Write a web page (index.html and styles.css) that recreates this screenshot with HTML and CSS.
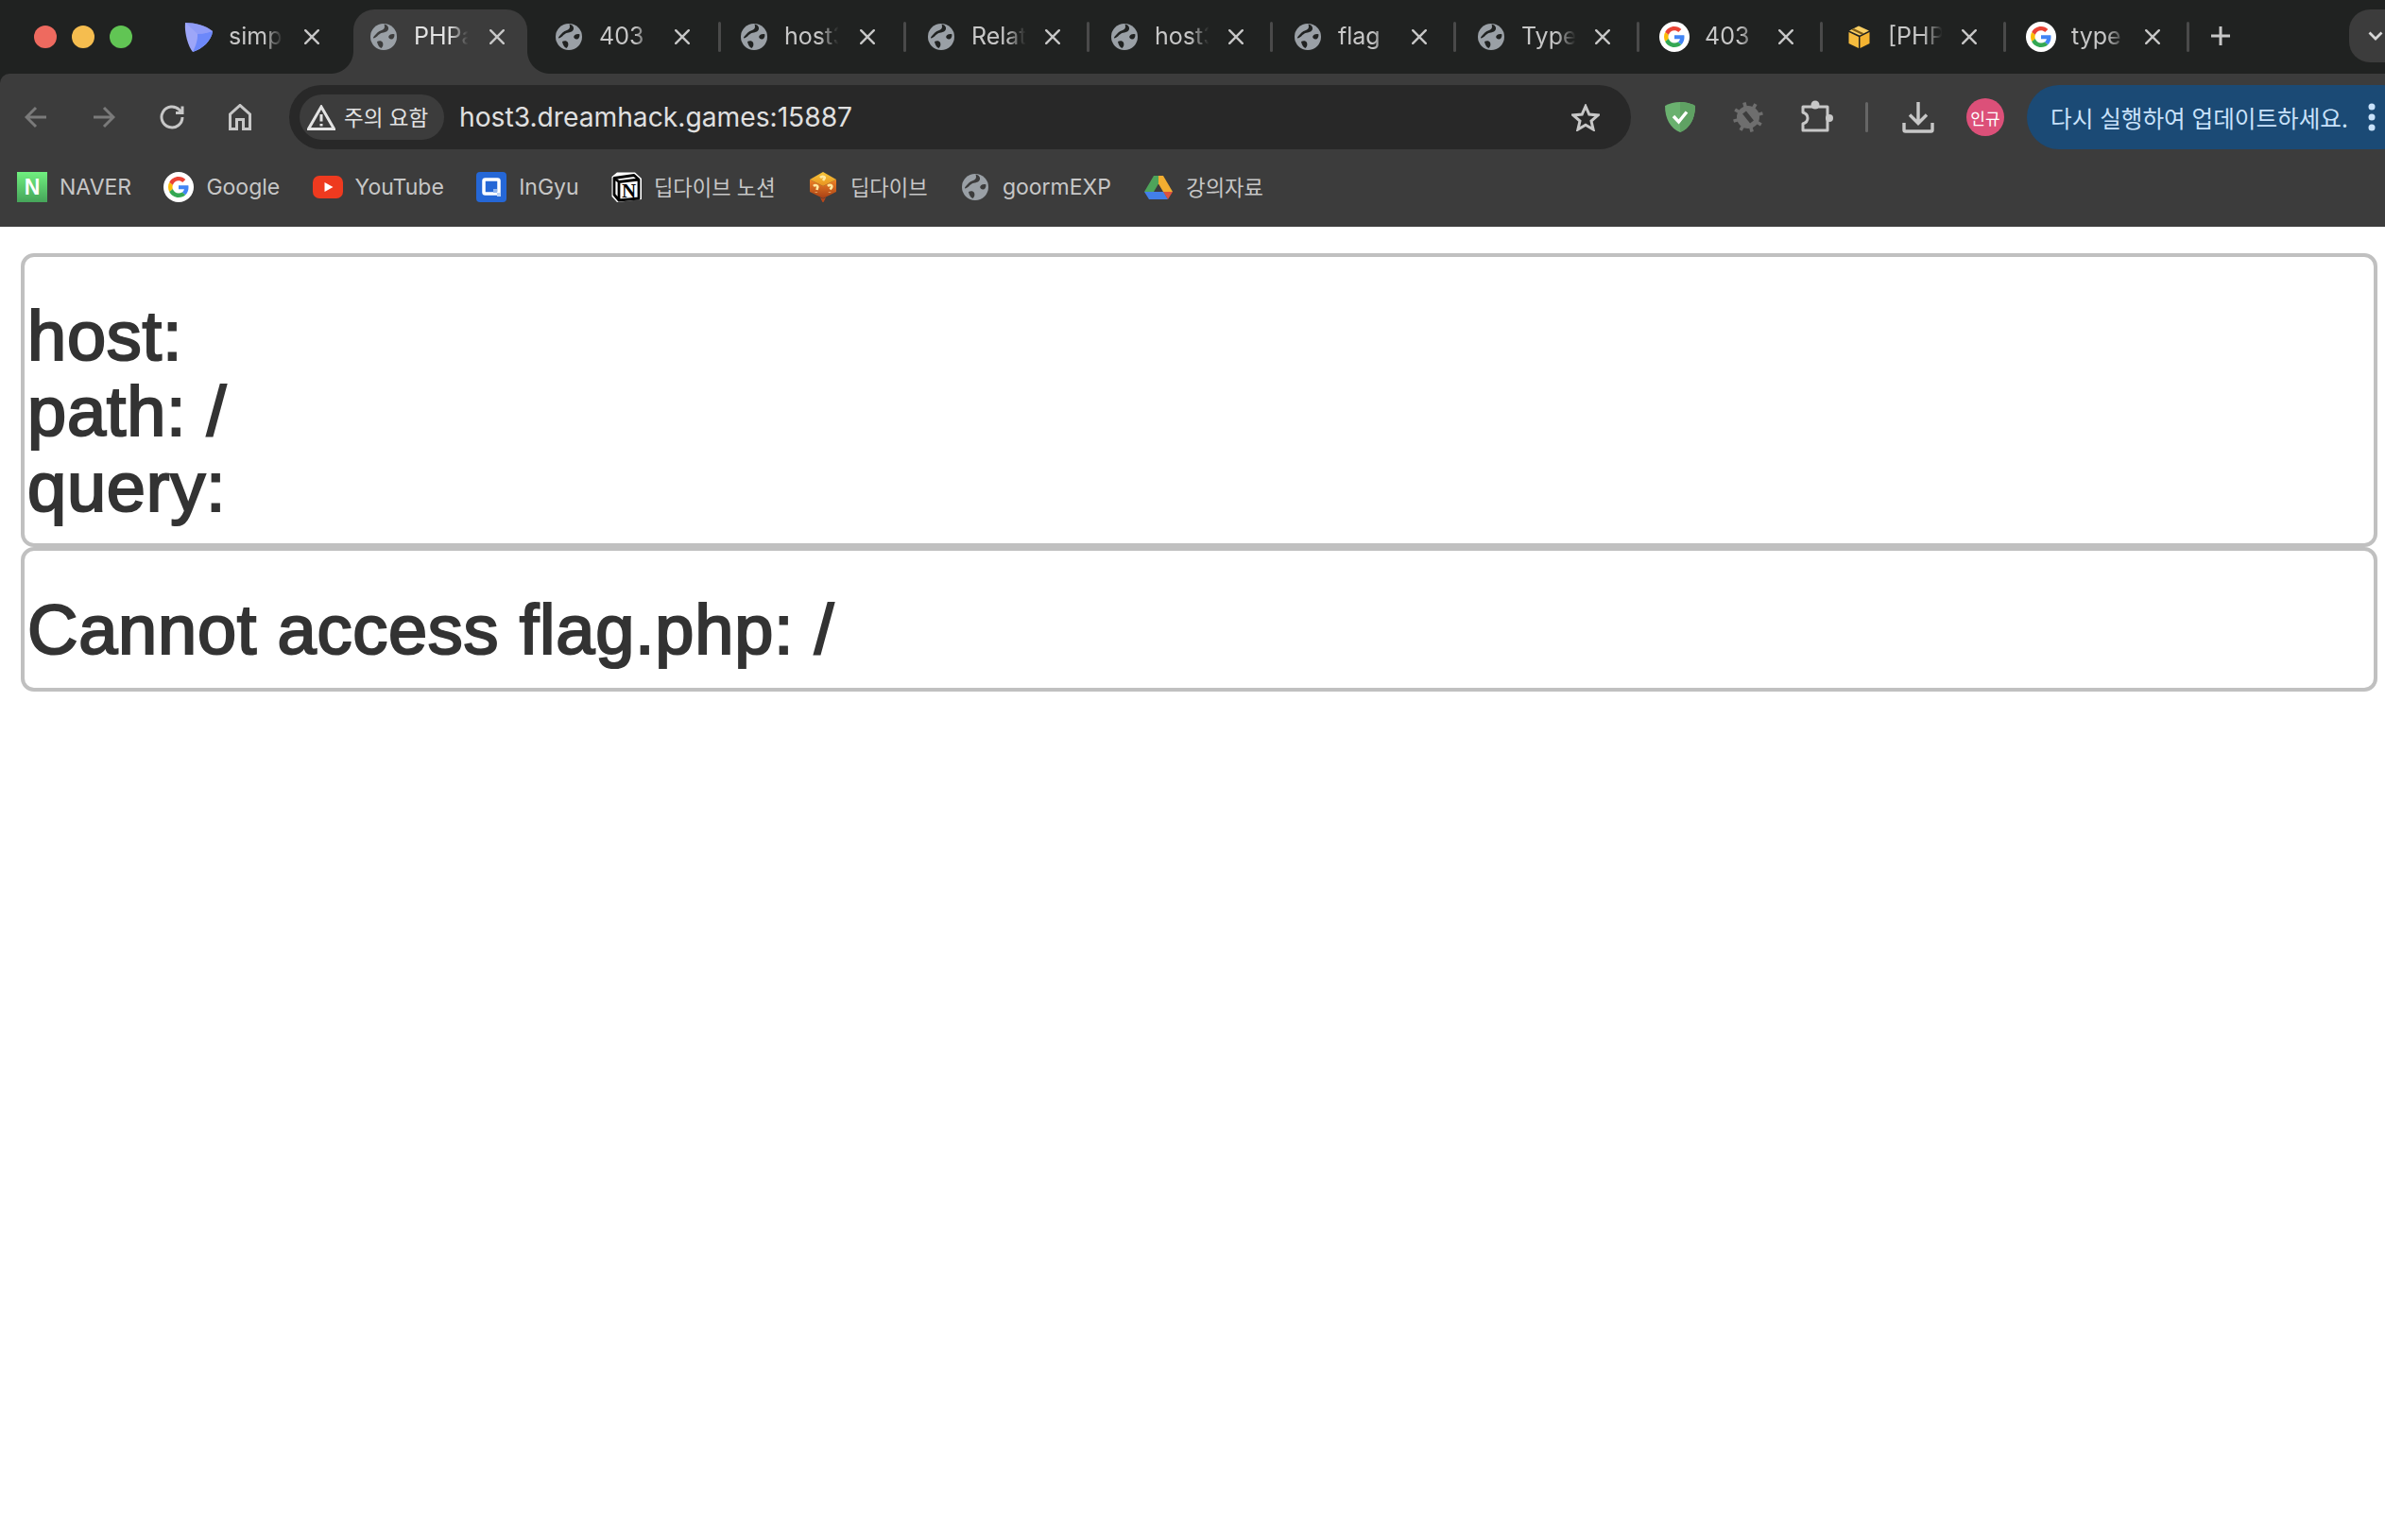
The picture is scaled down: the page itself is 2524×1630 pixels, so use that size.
FILE: index.html
```html
<!DOCTYPE html>
<html lang="ko">
<head>
<meta charset="utf-8">
<title>host3.dreamhack.games:15887</title>
<link rel="stylesheet" href="styles.css">
</head>
<body>
<svg class="defs" width="0" height="0" aria-hidden="true">
  <defs>
    <symbol id="globe" viewBox="0 0 32 32">
      <circle cx="16" cy="16" r="14" class="globe-base"/>
      <path class="globe-cut" d="M16.5 2.5C20.5 3.5 22 6.5 20.5 9C19 11.5 15 11 12.5 12.5C10 14 8.5 17 5 17.5C4.5 16 6.5 15 8 13C10 10 13 9.5 15 8.5C17 7.5 17.5 5.5 16.5 2.5Z"/>
      <path class="globe-cut" d="M9 21C11.5 19.5 14 20 15 22C16 24.5 15 26.5 13.5 28C11 27 9.5 24 9 21Z"/>
      <path class="globe-cut" d="M27.5 13.5C25 12.5 22.5 13.5 21.5 15C20.5 17 22.5 18.5 24.5 18.5C26 18.5 27.5 17 27.5 13.5Z"/>
    </symbol>
    <symbol id="gicon" viewBox="-11 -11 70 70">
      <circle cx="24" cy="24" r="35" fill="#fff"/>
      <path fill="#ea4335" d="M24 9.5c3.54 0 6.71 1.22 9.21 3.6l6.85-6.85C35.9 2.38 30.47 0 24 0 14.62 0 6.51 5.38 2.56 13.22l7.98 6.19C12.43 13.72 17.74 9.5 24 9.5z"/>
      <path fill="#4285f4" d="M46.98 24.55c0-1.57-.15-3.09-.38-4.55H24v9.02h12.94c-.58 2.96-2.26 5.48-4.78 7.18l7.73 6c4.51-4.18 7.09-10.36 7.09-17.65z"/>
      <path fill="#fbbc05" d="M10.53 28.59c-.48-1.45-.76-2.99-.76-4.59s.27-3.14.76-4.59l-7.98-6.19C.92 16.46 0 20.12 0 24c0 3.88.92 7.54 2.56 10.78l7.97-6.19z"/>
      <path fill="#34a853" d="M24 48c6.48 0 11.93-2.13 15.89-5.81l-7.73-6c-2.15 1.45-4.92 2.3-8.16 2.3-6.26 0-11.57-4.22-13.47-9.91l-7.98 6.19C6.51 42.62 14.62 48 24 48z"/>
    </symbol>
    <symbol id="close" viewBox="0 0 16 16">
      <path d="M1.2 1.2L14.8 14.8M14.8 1.2L1.2 14.8" class="stroke-close"/>
    </symbol>
    <linearGradient id="naver-grad" x1="0" y1="0" x2="0" y2="1">
      <stop offset="0" stop-color="#70f07f"/>
      <stop offset="1" stop-color="#46a45a"/>
    </linearGradient>
    <linearGradient id="cube-top" x1="0" y1="0" x2="0" y2="1">
      <stop offset="0" stop-color="#f7c83a"/>
      <stop offset="1" stop-color="#e8901f"/>
    </linearGradient>
    <linearGradient id="cube-side" x1="0" y1="0" x2="0" y2="1">
      <stop offset="0" stop-color="#ef8426"/>
      <stop offset="1" stop-color="#a83f15"/>
    </linearGradient>
  </defs>
</svg>

<header class="chrome">
  <div class="strip">
    <div class="lights">
      <span class="light red"></span>
      <span class="light yellow"></span>
      <span class="light green"></span>
    </div>
    <div class="tabs">
      <div class="tab wide">
        <svg class="favicon" viewBox="0 0 32 32">
          <path fill="#9da6f8" d="M2 1C12 1 24 4 31 10C30 20 20 29 10 32C5 26 1 12 2 1Z"/>
          <path fill="#6c88fa" d="M15 13C21 13 27 11 31 10C30 20 20 29 10 32C13 26 15.5 19 15 13Z"/>
          <path fill="#8494f8" d="M2 1C12 1 24 4 31 10C27 11 21 13 15 13C11 9 6 4 2 1Z" opacity=".55"/>
        </svg>
        <span class="title">simp</span>
        <svg class="x"><use href="#close"/></svg>
      </div>
      <div class="tab wide active">
        <svg class="favicon"><use href="#globe"/></svg>
        <span class="title">PHPa</span>
        <svg class="x"><use href="#close"/></svg>
      </div>
      <div class="tab wide sep">
        <svg class="favicon"><use href="#globe"/></svg>
        <span class="title">403</span>
        <svg class="x"><use href="#close"/></svg>
      </div>
      <div class="tab wide sep">
        <svg class="favicon"><use href="#globe"/></svg>
        <span class="title">host3</span>
        <svg class="x"><use href="#close"/></svg>
      </div>
      <div class="tab sep">
        <svg class="favicon"><use href="#globe"/></svg>
        <span class="title">Relat</span>
        <svg class="x"><use href="#close"/></svg>
      </div>
      <div class="tab sep">
        <svg class="favicon"><use href="#globe"/></svg>
        <span class="title">host3</span>
        <svg class="x"><use href="#close"/></svg>
      </div>
      <div class="tab sep">
        <svg class="favicon"><use href="#globe"/></svg>
        <span class="title">flag</span>
        <svg class="x"><use href="#close"/></svg>
      </div>
      <div class="tab sep">
        <svg class="favicon"><use href="#globe"/></svg>
        <span class="title">Type</span>
        <svg class="x"><use href="#close"/></svg>
      </div>
      <div class="tab sep">
        <svg class="favicon"><use href="#gicon"/></svg>
        <span class="title">403</span>
        <svg class="x"><use href="#close"/></svg>
      </div>
      <div class="tab sep">
        <svg class="favicon" viewBox="0 0 32 32">
          <path fill="#f8ce62" d="M17 4.5L28 9.5L18 14.5L7 9.5Z"/>
          <path fill="#f5bc3e" d="M6.5 11L17 16V28L6.5 23Z"/>
          <path fill="#f3b331" d="M18.5 16L28.5 11V23L18.5 28Z"/>
          <path fill="#7c5a14" d="M12 7.2L22.5 12.3L20 13.5L9.5 8.4Z"/>
        </svg>
        <span class="title">[PHP</span>
        <svg class="x"><use href="#close"/></svg>
      </div>
      <div class="tab sep">
        <svg class="favicon"><use href="#gicon"/></svg>
        <span class="title">type</span>
        <svg class="x"><use href="#close"/></svg>
      </div>
    </div>
    <svg class="plus" viewBox="0 0 20 20"><path d="M10 0V20M0 10H20"/></svg>
    <div class="tab-menu">
      <svg class="chev" viewBox="0 0 16 10"><path d="M1.5 1.5L8 8L14.5 1.5"/></svg>
    </div>
  </div>

  <div class="toolbar">
    <div class="nav">
      <span class="nav-btn"><svg class="ico dim" width="24" height="24" viewBox="0 0 24 24"><path d="M23 12H2M12 2L2 12L12 22"/></svg></span>
      <span class="nav-btn"><svg class="ico dim" width="24" height="24" viewBox="0 0 24 24"><path d="M1 12H22M12 2L22 12L12 22"/></svg></span>
      <span class="nav-btn"><svg class="ico" width="26" height="26" viewBox="0 0 26 26"><path d="M24 13A11 11 0 1 1 20.8 5.2L24 8.5M24 1.5V8.5H17"/></svg></span>
      <span class="nav-btn"><svg class="ico" width="24" height="28" viewBox="0 0 24 28"><path d="M1.5 26.5V11L12 1.5L22.5 11V26.5H15.5V16.5H8.5V26.5Z"/></svg></span>
    </div>
    <div class="omnibox">
      <div class="chip">
        <svg class="ico warn" width="30" height="27" viewBox="0 0 30 27"><path d="M15 2L28.5 25.5H1.5Z"/><path d="M15 10V17.5M15 20V22.5"/></svg>
        <span class="chip-text">주의 요함</span>
      </div>
      <span class="url">host3.dreamhack.games:15887</span>
      <svg class="ico star" width="30" height="29" viewBox="0 0 30 29"><path d="M15 2.5L18.8 11L28 11.9L21 18L23.1 27L15 22.3L6.9 27L9 18L2 11.9L11.2 11Z"/></svg>
    </div>
    <div class="exts">
      <svg class="ext" viewBox="0 0 36 36">
        <path fill="#6ab16f" d="M18 2C24 2 29 3.5 34 6C34 20 28 30 18 34C8 30 2 20 2 6C7 3.5 12 2 18 2Z"/>
        <path fill="#5fa163" d="M18 2C24 2 29 3.5 34 6C34 20 28 30 18 34Z"/>
        <path d="M11 17L16.5 23L25 12.5" class="check"/>
      </svg>
      <svg class="ext" viewBox="0 0 36 36">
        <g class="bug-legs" transform="rotate(30 18 18)">
          <path d="M18 2V34M2 18H34M6.7 6.7L29.3 29.3M29.3 6.7L6.7 29.3"/>
        </g>
        <circle cx="18" cy="18" r="12" fill="#6e6e6e"/>
        <path d="M14 13L22 23" class="bug-slot"/>
      </svg>
      <svg class="ext" viewBox="0 0 36 36">
        <path class="puzzle" d="M4 7H30V32H4V25C7 24 9 21.5 9 19C9 16.5 7 14 4 13Z"/>
        <circle cx="17" cy="5" r="4.5" fill="#c7c7c7"/>
        <circle cx="32" cy="19" r="4" fill="#c7c7c7"/>
      </svg>
      <span class="tool-sep"></span>
      <svg class="ext dl" viewBox="0 0 36 36">
        <path class="dl-path" d="M18 2V24M9 15.5L18 24.5L27 15.5"/>
        <path class="dl-path" d="M3 24V31.5A1.5 1.5 0 0 0 4.5 33H31.5A1.5 1.5 0 0 0 33 31.5V24"/>
      </svg>
      <span class="avatar">인규</span>
    </div>
    <div class="update">
      <span class="update-text">다시 실행하여 업데이트하세요.</span>
      <svg class="dots" width="10" height="32" viewBox="0 0 10 32"><circle cx="5" cy="5" r="3.5"/><circle cx="5" cy="16" r="3.5"/><circle cx="5" cy="27" r="3.5"/></svg>
    </div>
  </div>

  <nav class="bookmarks">
    <a class="bm">
      <svg class="bm-ico" viewBox="0 0 32 32">
        <rect width="32" height="32" fill="url(#naver-grad)"/>
        <text x="16" y="24" class="naver-n">N</text>
      </svg>
      <span>NAVER</span>
    </a>
    <a class="bm"><svg class="bm-ico"><use href="#gicon"/></svg><span>Google</span></a>
    <a class="bm">
      <svg class="bm-ico" viewBox="0 0 32 32">
        <rect x="0" y="4" width="32" height="24" rx="7" fill="#ee3a1f"/>
        <path d="M12.5 11L21.5 16L12.5 21Z" fill="#fff"/>
      </svg>
      <span>YouTube</span>
    </a>
    <a class="bm">
      <svg class="bm-ico" viewBox="0 0 32 32">
        <rect width="32" height="32" rx="4" fill="#2567d6"/>
        <rect x="8" y="8" width="16" height="15" rx="1.5" fill="none" stroke="#fff" stroke-width="3.5"/>
        <rect x="18" y="18" width="4" height="4" fill="#8fb4ee"/>
        <rect x="22" y="22" width="4" height="4" fill="#bcd3f5"/>
      </svg>
      <span>InGyu</span>
    </a>
    <a class="bm">
      <svg class="bm-ico" viewBox="0 0 32 32">
        <path fill="#fff" d="M6 0.5L25 0.5L32 7V29L6 32L0.5 26V5Z"/>
        <path fill="none" stroke="#000" stroke-width="2.8" stroke-linejoin="round" d="M3 6.5L24 3.5L29 8V28L8 30L3 24ZM3 6.5L8 10.5L29 8M8 10.5V30"/>
        <text x="18.5" y="26.5" class="notion-n">N</text>
      </svg>
      <span class="ko">딥다이브 노션</span>
    </a>
    <a class="bm">
      <svg class="bm-ico" viewBox="0 0 32 32">
        <path fill="url(#cube-side)" d="M2 8L16 15V28L2 21Z"/>
        <path fill="url(#cube-side)" d="M30 8L16 15V28L30 21Z"/>
        <path fill="url(#cube-top)" d="M16 0L30 8L16 15L2 8Z"/>
        <path fill="#b8461a" d="M13 27L16 28.5L19 27L16.5 32H15.5Z"/>
        <path class="cube-mark" d="M13 6C15 4 19 5 17.5 7L16 9"/>
        <path class="cube-glow" d="M6 15C8 13 11.5 14.5 10 17L9.5 19M8.8 21.5V22"/>
        <path class="cube-glow" d="M21 15C23 13 26.5 14 25 16.5L23.5 18.5M23 21V21.5"/>
      </svg>
      <span class="ko">딥다이브</span>
    </a>
    <a class="bm"><svg class="bm-ico"><use href="#globe"/></svg><span>goormEXP</span></a>
    <a class="bm">
      <svg class="bm-ico" viewBox="0 0 32 32">
        <path fill="#4ea45a" d="M11 4H16V12.5L11 21H1Z"/>
        <path fill="#f3ae30" d="M16 4H21L31 21H21L16 12.5Z"/>
        <path fill="#437fe8" d="M1 21H21.5L26 29H6Z"/>
        <path fill="#dd5340" d="M21 21H31L26 29Z"/>
      </svg>
      <span class="ko">강의자료</span>
    </a>
  </nav>
</header>

<main class="page">
  <section class="panel">
    <p class="panel-text">host:<br>path: /<br>query:</p>
  </section>
  <section class="panel last">
    <p class="panel-text">Cannot access flag.php: /</p>
  </section>
</main>
</body>
</html>
```

FILE: styles.css
```css
* { box-sizing: border-box; }

html, body {
  margin: 0;
  padding: 0;
  background: #fff;
  overflow: hidden;
}

body {
  height: 1630px;
  font-family: Inter, "Noto Sans CJK KR", sans-serif;
}

.defs { position: absolute; }

.chrome {
  height: 240px;
  background: #202221;
  overflow: hidden;
}

/* tab strip */
.strip {
  display: flex;
  height: 78px;
  padding-top: 10px;
  --cut: #202221;
}

.lights {
  display: flex;
  gap: 16px;
  margin: 17px 0 0 36px;
}

.light {
  width: 24px;
  height: 24px;
  border-radius: 50%;
}
.light.red { background: #ee6a5f; }
.light.yellow { background: #f5bd4f; }
.light.green { background: #61c554; }

.tabs {
  display: flex;
  margin-left: 33px;
}

.tab {
  position: relative;
  display: flex;
  align-items: center;
  flex: 0 0 194px;
  height: 68px;
  padding: 0 0 10px 23px;
  color: #c7c7c7;
}

.tab.wide {
  flex-basis: 196px;
  padding-left: 21px;
}

.tab.sep::after {
  content: "";
  position: absolute;
  right: -2px;
  top: 13px;
  width: 3px;
  height: 32px;
  background: #4a4a4a;
  border-radius: 2px;
}

.tab.active {
  --cut: #3c3c3c;
  color: #e3e3e3;
  z-index: 1;
}

.tab.active::before {
  content: "";
  position: absolute;
  z-index: -1;
  inset: 0 7px 0 5px;
  background: #3c3c3c;
  border-radius: 22px 22px 0 0;
}

.tab.active::after {
  content: "";
  position: absolute;
  z-index: -1;
  inset: 44px -17px 0 -19px;
  background:
    radial-gradient(circle at 0 0, transparent 23.5px, #3c3c3c 24.5px) left bottom / 24px 24px no-repeat,
    radial-gradient(circle at 100% 0, transparent 23.5px, #3c3c3c 24.5px) right bottom / 24px 24px no-repeat;
}

.favicon {
  flex: 0 0 32px;
  width: 32px;
  height: 32px;
}

.globe-base { fill: #9aa0a6; }
.globe-cut { fill: var(--cut, #3c3c3c); }

.title {
  flex: 0 0 60px;
  width: 60px;
  margin-bottom: 2px;
  margin-left: 16px;
  overflow: hidden;
  white-space: nowrap;
  font-size: 25px;
  line-height: 32px;
  -webkit-mask-image: linear-gradient(to right, #000 62%, transparent 96%);
  mask-image: linear-gradient(to right, #000 62%, transparent 96%);
}

.x {
  flex: 0 0 16px;
  width: 16px;
  height: 16px;
  margin-left: 18px;
}

.wide .x { margin-left: 20px; }

.stroke-close {
  fill: none;
  stroke: #c7c7c7;
  stroke-width: 2.4;
  stroke-linecap: round;
}

.plus {
  flex: 0 0 20px;
  width: 20px;
  height: 20px;
  margin: 18px 0 0 25px;
}

.plus path {
  fill: none;
  stroke: #c7c7c7;
  stroke-width: 3;
}

.tab-menu {
  display: flex;
  align-items: center;
  flex: 0 0 70px;
  height: 56px;
  margin-left: 126px;
  padding-left: 20px;
  background: #3c3c3c;
  border-radius: 22px;
}

.chev {
  width: 16px;
  height: 10px;
}

.chev path {
  fill: none;
  stroke: #d6d6d6;
  stroke-width: 2.8;
}

/* toolbar */
.toolbar {
  display: flex;
  height: 80px;
  padding-top: 12px;
  background: #3c3c3c;
  border-top-left-radius: 10px;
  overflow: hidden;
}

.nav {
  display: flex;
  gap: 32px;
  flex: 0 0 auto;
  height: 68px;
  padding-left: 18px;
}

.nav-btn {
  display: flex;
  align-items: center;
  justify-content: center;
  width: 40px;
  height: 68px;
}

.ico path {
  fill: none;
  stroke: #c7c7c7;
  stroke-width: 3;
}

.ico.dim path { stroke: #7a7a7a; }
.ico.warn path { stroke: #e3e3e3; }

.omnibox {
  display: flex;
  align-items: center;
  flex: 0 0 1420px;
  height: 68px;
  margin-left: 32px;
  padding: 0 33px 0 11px;
  background: #282828;
  border-radius: 34px;
}

.chip {
  display: flex;
  align-items: center;
  flex: 0 0 153px;
  height: 48px;
  padding-left: 8px;
  background: #3c3c3c;
  border-radius: 24px;
}

.chip-text {
  margin: 0 0 2px 9px;
  font-family: "Noto Sans CJK KR", sans-serif;
  font-size: 22.5px;
  color: #e3e3e3;
  white-space: nowrap;
}

.url {
  margin-left: 16px;
  flex: 1;
  font-size: 28.2px;
  color: #e0e0e0;
  white-space: nowrap;
}

.exts {
  display: flex;
  align-items: center;
  flex: 0 0 auto;
  height: 68px;
  margin-left: 34px;
}

.ext {
  flex: 0 0 36px;
  width: 36px;
  height: 36px;
  margin-right: 36px;
}

.check {
  fill: none;
  stroke: #fff;
  stroke-width: 3.4;
}

.bug-legs path {
  fill: none;
  stroke: #6e6e6e;
  stroke-width: 3.6;
}

.bug-slot {
  fill: none;
  stroke: #3c3c3c;
  stroke-width: 5;
}

.puzzle {
  fill: none;
  stroke: #c7c7c7;
  stroke-width: 3;
  stroke-linejoin: round;
}

.tool-sep {
  flex: 0 0 3px;
  width: 3px;
  height: 32px;
  margin-right: 35px;
  margin-left: -2px;
  background: #666;
  border-radius: 2px;
}

.ext.dl { margin-right: 33px; }

.dl-path {
  fill: none;
  stroke: #c7c7c7;
  stroke-width: 3.4;
}

.avatar {
  display: flex;
  align-items: center;
  justify-content: center;
  flex: 0 0 40px;
  width: 40px;
  height: 40px;
  font-family: "Noto Sans CJK KR", sans-serif;
  font-size: 17px;
  color: #fff;
  background: #dc5079;
  border-radius: 50%;
}

.update {
  display: flex;
  align-items: center;
  flex: 0 0 410px;
  height: 68px;
  margin-left: 24px;
  padding-left: 25px;
  background: #1b4a75;
  border-radius: 34px;
}

.update-text {
  margin-bottom: 1px;
  font-family: "Noto Sans CJK KR", sans-serif;
  font-size: 24.6px;
  color: #c9e2fb;
  white-space: nowrap;
}

.dots {
  flex: 0 0 10px;
  margin-left: 20px;
  fill: #c9e2fb;
}

/* bookmarks */
.bookmarks {
  display: flex;
  gap: 34.3px;
  height: 82px;
  padding: 24px 0 0 18px;
  background: #3c3c3c;
  --cut: #3c3c3c;
}

.bm {
  display: flex;
  align-items: center;
  gap: 13px;
  height: 32px;
  font-size: 23px;
  color: #c7c7c7;
  white-space: nowrap;
}

.bm .ko {
  margin-bottom: 2px;
  font-size: 22.2px;
}

.bm-ico {
  flex: 0 0 32px;
  width: 32px;
  height: 32px;
}

.naver-n {
  font-family: "Liberation Sans", sans-serif;
  font-weight: 700;
  font-size: 23px;
  fill: #fff;
  text-anchor: middle;
}

.notion-n {
  font-family: "Liberation Serif", serif;
  font-weight: 700;
  font-size: 21px;
  fill: #000;
  text-anchor: middle;
}

.cube-mark, .cube-glow {
  fill: none;
  stroke: #ffe9a0;
  stroke-width: 2.6;
}

/* page */
.page {
  padding: 28px 8px 0 22px;
}

.panel {
  padding: 44px 0 19px 3px;
  border: 4px solid #c0c0c0;
  border-radius: 14px;
}

.panel.last {
  padding-bottom: 21px;
}

.panel-text {
  margin: 0;
  font-family: "Liberation Sans", Arial, sans-serif;
  font-size: 74px;
  line-height: 80px;
  letter-spacing: 0.76px;
  color: #333;
  -webkit-text-stroke: 2.2px #333;
}
```
